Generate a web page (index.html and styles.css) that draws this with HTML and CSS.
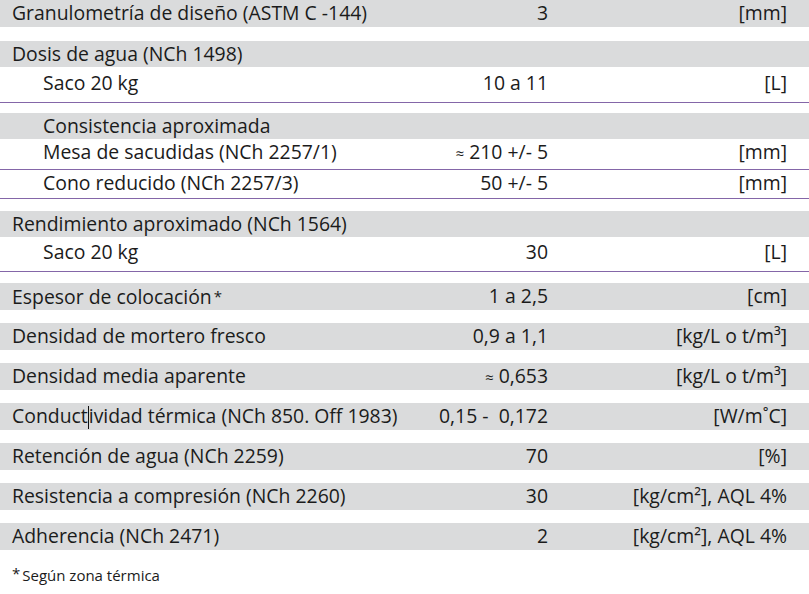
FILE: index.html
```html
<!DOCTYPE html>
<html lang="es">
<head>
<meta charset="utf-8">
<title>Ficha técnica</title>
<link rel="stylesheet" href="styles.css">
</head>
<body>
<div class="sheet">
  <div class="row gray h27"><span class="lab">Granulometría de diseño (ASTM C -144)</span><span class="val">3</span><span class="unit">[mm]</span></div>
  <div class="row gray h26 gap14"><span class="lab">Dosis de agua (NCh 1498)</span><span class="val"></span><span class="unit"></span></div>
  <div class="row line pt3 pb6"><span class="lab ind">Saco 20 kg</span><span class="val">10 a 11</span><span class="unit">[L]</span></div>
  <div class="row gray h26 gap10"><span class="lab ind">Consistencia aproximada</span><span class="val"></span><span class="unit"></span></div>
  <div class="row line pb3"><span class="lab ind">Mesa de sacudidas (NCh 2257/1)</span><span class="val"><span class="approx">≈</span> 210 +/- 5</span><span class="unit">[mm]</span></div>
  <div class="row line pb2"><span class="lab ind">Cono reducido (NCh 2257/3)</span><span class="val">50 +/- 5</span><span class="unit">[mm]</span></div>
  <div class="row gray h26 gap12"><span class="lab">Rendimiento aproximado (NCh 1564)</span><span class="val"></span><span class="unit"></span></div>
  <div class="row line pt2 pb6"><span class="lab ind">Saco 20 kg</span><span class="val">30</span><span class="unit">[L]</span></div>
  <div class="row gray h27 gap11"><span class="lab">Espesor de colocación<span class="ast">*</span></span><span class="val">1 a 2,5</span><span class="unit">[cm]</span></div>
  <div class="row gray h27 gap13"><span class="lab">Densidad de mortero fresco</span><span class="val">0,9 a 1,1</span><span class="unit">[kg/L o t/m³]</span></div>
  <div class="row gray h27 gap13"><span class="lab">Densidad media aparente</span><span class="val"><span class="approx">≈</span> 0,653</span><span class="unit">[kg/L o t/m³]</span></div>
  <div class="row gray h27 gap13"><span class="lab">Conduct<span class="caret"></span>ividad térmica (NCh 850. Off 1983)</span><span class="val">0,15 -  0,172</span><span class="unit">[W/m˚C]</span></div>
  <div class="row gray h27 gap13"><span class="lab">Retención de agua (NCh 2259)</span><span class="val">70</span><span class="unit">[%]</span></div>
  <div class="row gray h27 gap13"><span class="lab">Resistencia a compresión (NCh 2260)</span><span class="val">30</span><span class="unit">[kg/cm²], AQL 4%</span></div>
  <div class="row gray h27 gap13"><span class="lab">Adherencia (NCh 2471)</span><span class="val">2</span><span class="unit">[kg/cm²], AQL 4%</span></div>
  <p class="note"><span class="ast">*</span>Según zona térmica</p>
</div>
</body>
</html>
```
FILE: styles.css
```css
html, body {
  margin: 0;
  padding: 0;
  background: #ffffff;
}
body {
  font-family: "Open Sans", "Noto Sans", sans-serif;
  color: #1b1b1b;
}
.sheet {
  width: 809px;
  display: flex;
  flex-direction: column;
}
.row {
  display: grid;
  grid-template-columns: 400px 148px 239px;
  padding-right: 22px;
  font-size: 19.4px;
  line-height: 26px;
  align-items: start;
  white-space: pre;
}
.gray { background: #dadbdc; }
.h26 { height: 26px; }
.h27 { height: 27px; }
.gap10 { margin-top: 10px; }
.gap11 { margin-top: 11px; }
.gap12 { margin-top: 12px; }
.gap13 { margin-top: 13px; }
.gap14 { margin-top: 14px; }
.line { border-bottom: 1px solid #8466a8; }
.pt2 { padding-top: 2px; }
.pt3 { padding-top: 3px; }
.pb2 { padding-bottom: 2px; }
.pb3 { padding-bottom: 3px; }
.pb6 { padding-bottom: 6px; }
.lab { padding-left: 12px; }
.lab.ind { padding-left: 43px; }
.val, .unit { text-align: right; }
.approx { font-size: 15px; }
.ast { font-size: 15px; margin-left: 2px; vertical-align: 2px; }
.caret {
  display: inline-block;
  width: 0;
  height: 23px;
  border-left: 1px solid #111;
  vertical-align: -6px;
}
.note {
  margin: 13px 0 0 0;
  padding-left: 12px;
  font-size: 15px;
  line-height: 20px;
}
.note .ast { margin-left: 0; margin-right: 2px; }
```
